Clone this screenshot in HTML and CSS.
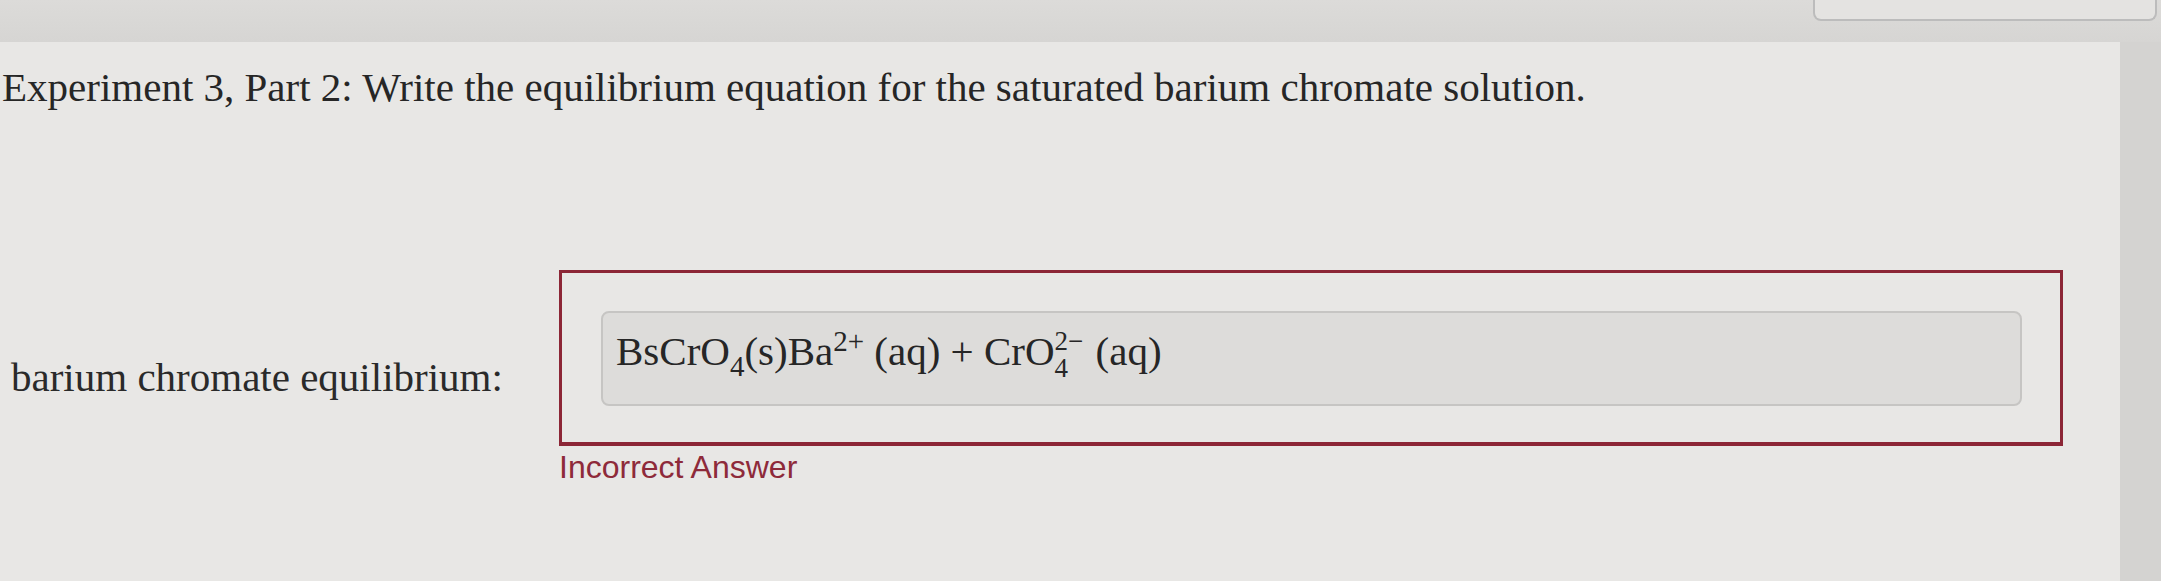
FILE: index.html
```html
<!DOCTYPE html>
<html lang="en">
<head>
<meta charset="utf-8">
<title>Experiment 3, Part 2</title>
<link rel="stylesheet" href="styles.css">
</head>
<body>
<div class="page">
  <header class="topbar">
    <div class="topbar-button"></div>
  </header>
  <div class="layout">
    <main class="panel">
      <h1 class="prompt">Experiment 3, Part 2: Write the equilibrium equation for the saturated barium chromate solution.</h1>
      <div class="answer-row">
        <label class="answer-label">barium chromate equilibrium:</label>
        <div class="answer-col">
          <div class="answer-frame">
            <div class="answer-input">
              <span class="eq">BsCrO<sub>4</sub>(s)Ba<sup>2+</sup> (aq) + CrO<span class="subsup"><span class="ss-top">2−</span><span class="ss-bot">4</span></span> (aq)</span>
            </div>
          </div>
          <div class="feedback">Incorrect Answer</div>
        </div>
      </div>
    </main>
    <aside class="gutter"></aside>
  </div>
</div>
</body>
</html>
```

FILE: styles.css
```css
html, body {
  margin: 0;
  padding: 0;
}

body {
  width: 2161px;
  height: 581px;
  overflow: hidden;
  background: #d9d8d6;
  font-family: "Liberation Serif", "Times New Roman", serif;
  color: #2b2b2b;
}

.page {
  display: flex;
  flex-direction: column;
  height: 581px;
}

.topbar {
  height: 42px;
  flex: none;
  display: flex;
  justify-content: flex-end;
  align-items: flex-start;
  padding-right: 4px;
  background: linear-gradient(#dcdbd9, #d6d5d3);
}

.topbar-button {
  width: 340px;
  height: 19px;
  border: 2px solid #bcbcbc;
  border-top: none;
  border-radius: 0 0 8px 8px;
  background: #e4e3e1;
}

.layout {
  flex: 1;
  display: flex;
}

.panel {
  width: 2120px;
  background: #e8e7e5;
  padding-top: 21px;
}

.gutter {
  flex: 1;
  background: #d4d3d1;
}

.prompt {
  margin: 0 0 0 2px;
  font-weight: normal;
  font-size: 41px;
  line-height: 48px;
  color: #262626;
}

.answer-row {
  display: flex;
  align-items: flex-start;
  margin-top: 159px;
}

.answer-label {
  width: 548px;
  padding-left: 11px;
  padding-top: 84px;
  font-size: 41px;
  line-height: 46px;
  color: #2a2a2a;
}

.answer-col {
  width: 1504px;
}

.answer-frame {
  height: 176px;
  border: 3px solid #8c2636;
  border-bottom-width: 4px;
  padding: 38px 38px 0 39px;
  box-sizing: border-box;
}

.answer-input {
  height: 95px;
  box-sizing: border-box;
  border: 2px solid #c6c5c3;
  border-radius: 8px;
  background: #dddcda;
  padding: 12px 0 0 13px;
}

.eq {
  font-size: 41px;
  line-height: 52px;
  color: #262626;
}

.eq sub,
.eq sup {
  font-size: 29px;
  line-height: 0;
}

.eq sub {
  vertical-align: -11px;
}

.eq sup {
  vertical-align: 14px;
}

/* stacked charge over count, baseline sits on the lower line */
.subsup {
  display: inline-block;
  vertical-align: -12px;
  font-size: 27px;
  line-height: 27px;
  margin-right: 2px;
}

.ss-top,
.ss-bot {
  display: block;
}

.feedback {
  margin-top: 3px;
  font-family: "Liberation Sans", Arial, sans-serif;
  font-size: 32px;
  line-height: 36px;
  color: #8e2a3a;
}
```
